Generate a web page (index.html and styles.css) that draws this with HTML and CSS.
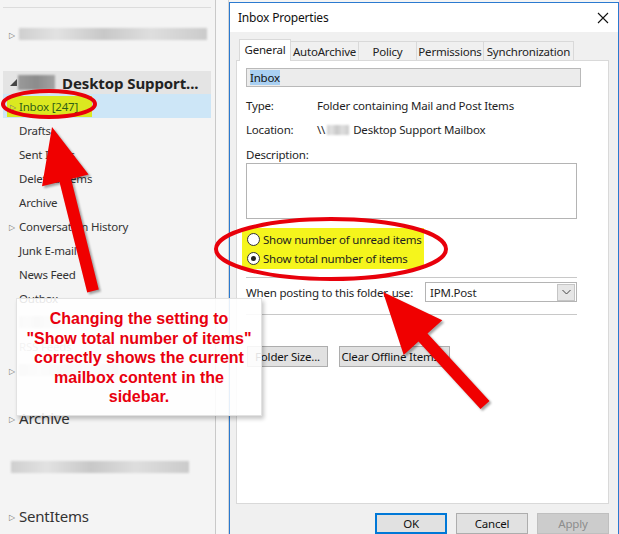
FILE: index.html
```html
<!DOCTYPE html>
<html lang="en">
<head>
    <meta charset="UTF-8">
    <title>Inbox Properties</title>
    <link rel="stylesheet" href="styles.css">
</head>
<body>
    <div class="screen">
        <aside class="sidebar">
            <div class="top-rule"></div>
            <div class="folder blurred-row"><span class="caret">&#9655;</span><span class="blur" style="width:188px"></span></div>
            <div class="account">
                <svg class="down" width="7" height="7" viewBox="0 0 7 7"><path d="M7 0V7H0Z" fill="#444"/></svg>
                <span class="blur dark" style="width:37px"></span>
                <b>Desktop Support...</b>
            </div>
            <div class="folder selected"><span class="hl"><span class="caret">&#9655;</span>Inbox [247]</span></div>
            <div class="folder">Drafts</div>
            <div class="folder">Sent Items</div>
            <div class="folder">Deleted Items</div>
            <div class="folder">Archive</div>
            <div class="folder"><span class="caret">&#9655;</span>Conversation History</div>
            <div class="folder">Junk E-mail</div>
            <div class="folder">News Feed</div>
            <div class="folder">Outbox</div>
            <div class="folder"><span class="blur" style="width:40px"></span></div>
            <div class="folder faded">RSS Feeds</div>
            <div class="folder"><span class="caret">&#9655;</span><span class="blur" style="width:100px"></span></div>
            <div class="store"><span class="caret">&#9655;</span>Archive</div>
            <div class="store plain"><span class="blur" style="width:178px"></span></div>
            <div class="store"><span class="caret">&#9655;</span>SentItems</div>
        </aside>

        <div class="backdrop"></div>

        <section class="dialog">
            <div class="titlebar">
                <span>Inbox Properties</span>
                <svg width="12" height="12" viewBox="0 0 12 12"><path d="M1 1L11 11M11 1L1 11" stroke="#111" stroke-width="1.1"/></svg>
            </div>
            <div class="dialog-body">
                <div class="tabs">
                    <div class="tab active" style="width:52px">General</div>
                    <div class="tab" style="width:69px">AutoArchive</div>
                    <div class="tab" style="width:59px">Policy</div>
                    <div class="tab" style="width:68px">Permissions</div>
                    <div class="tab" style="width:91px">Synchronization</div>
                </div>
                <div class="panel">
                    <div class="name-field"><span class="sel">Inbox</span></div>
                    <div class="info type-row"><span class="label">Type:</span><span>Folder containing Mail and Post Items</span></div>
                    <div class="info loc-row"><span class="label">Location:</span><span>\\<span class="blur small" style="width:22px"></span>Desktop Support Mailbox</span></div>
                    <div class="info desc-row">Description:</div>
                    <div class="desc-box"></div>
                    <div class="radios">
                        <div class="radio"><span class="dot"></span>Show number of unread items</div>
                        <div class="radio"><span class="dot on"></span>Show total number of items</div>
                    </div>
                    <div class="rule"></div>
                    <div class="posting">
                        <span>When posting to this folder, use:</span>
                        <div class="select">
                            <span>IPM.Post</span>
                            <span class="drop"><svg width="9" height="6" viewBox="0 0 9 6"><path d="M0.5 1L4.5 5L8.5 1" fill="none" stroke="#444"/></svg></span>
                        </div>
                    </div>
                    <div class="rule second"></div>
                    <div class="panel-buttons">
                        <button class="btn" style="width:81px">Folder Size...</button>
                        <button class="btn" style="width:111px">Clear Offline Items...</button>
                    </div>
                </div>
                <div class="footer">
                    <button class="btn default">OK</button>
                    <button class="btn">Cancel</button>
                    <button class="btn disabled">Apply</button>
                </div>
            </div>
        </section>
    </div>

    <div class="callout">
        Changing the setting to<br>
        "Show total number of items"<br>
        correctly shows the current<br>
        mailbox content in the<br>
        sidebar.
    </div>

    <svg class="marks" width="619" height="534" viewBox="0 0 619 534">
        <ellipse cx="49" cy="104" rx="46" ry="13" fill="none" stroke="#e8000b" stroke-width="4"/>
        <ellipse cx="331" cy="249" rx="115" ry="30" fill="none" stroke="#e8000b" stroke-width="4"/>
        <g class="arrow">
            <polygon points="52,127 88.6,174.6 71.1,178.9 98.8,289.5 87.2,292.5 59.5,181.9 42,186.2"/>
            <polygon points="383,292 442.3,320.2 427.5,333.6 489.5,401 480.5,409 418.5,341.6 403.7,355"/>
        </g>
    </svg>
</body>
</html>
```

FILE: styles.css
```css
body {
    margin: 0;
    width: 619px;
    height: 534px;
    overflow: hidden;
    font-family: "Noto Sans", "Open Sans", sans-serif;
    font-size: 11.5px;
    letter-spacing: -0.2px;
    white-space: nowrap;
    color: #1e1e1e;
    background-color: #f4f4f4;
    position: relative;
}
.screen {
    display: flex;
    height: 534px;
}

/* sidebar */
.sidebar {
    width: 215px;
    border-right: 1px solid #c9c9c9;
    background-color: #f4f4f4;
    padding-top: 7px;
    box-sizing: content-box;
    flex-shrink: 0;
}
.top-rule {
    height: 1px;
    margin: 0 4px 0 3px;
    background-color: #dcdcdc;
}
.folder {
    height: 24px;
    margin: 0 4px 0 3px;
    padding-left: 16px;
    display: flex;
    align-items: center;
    position: relative;
    color: #333;
}
.blurred-row {
    margin-top: 14px;
    margin-bottom: 25px;
}
.caret {
    position: absolute;
    left: 6px;
    font-size: 8px;
    color: #777;
}
.blur {
    display: inline-block;
    height: 12px;
    background: linear-gradient(90deg, #cfcfcf, #e2e2e2 20%, #c8c8c8 45%, #dedede 70%, #cbcbcb);
    filter: blur(1.2px);
}
.blur.dark {
    height: 15px;
    margin: 0 7px 0 1px;
    background: linear-gradient(90deg, #9a9a9a, #8c8c8c 50%, #a3a3a3);
}
.blur.small {
    height: 10px;
    margin: 0 4px 0 2px;
    vertical-align: middle;
}
.account {
    height: 23px;
    margin: 0 4px 0 3px;
    background-color: #e4e4e4;
    display: flex;
    align-items: center;
    padding-left: 7px;
}
.account b {
    font-size: 15px;
    letter-spacing: -0.1px;
    color: #222;
}
.folder.selected {
    background-color: #cde6f7;
    padding-left: 0;
}
.hl {
    display: flex;
    align-items: center;
    height: 21px;
    padding: 0 14px 0 12px;
    margin-left: 4px;
    background-color: #dbe820;
    color: #2f5f16;
    position: relative;
}
.hl .caret {
    left: 3px;
}
.faded {
    color: #9a9a9a;
}
.store {
    height: 30px;
    margin: 21px 4px 0 3px;
    padding-left: 16px;
    display: flex;
    align-items: center;
    position: relative;
    font-size: 15px;
    color: #333;
}
.store.plain {
    margin-top: 19px;
    padding-left: 8px;
}
.store:last-child {
    margin-top: 19px;
}

.backdrop {
    width: 12px;
    flex-shrink: 0;
    background-color: #f7f7f7;
    border-right: 1px solid #d4d4d4;
}

/* dialog */
.dialog {
    width: 388px;
    margin-top: 2px;
    border: 1px solid #2b7ad0;
    border-bottom: none;
    background-color: #f0f0f0;
    display: flex;
    flex-direction: column;
}
.titlebar {
    height: 29px;
    background-color: #fff;
    display: flex;
    align-items: center;
    justify-content: space-between;
    padding: 0 9px 0 8px;
    font-size: 12px;
    color: #111;
}
.dialog-body {
    padding: 0 9px 0 6px;
}
.tabs {
    display: flex;
    align-items: flex-end;
    margin-top: 7px;
    padding-left: 3px;
    height: 21px;
}
.tab {
    height: 19px;
    box-sizing: border-box;
    border: 1px solid #d9d9d9;
    border-bottom: none;
    margin-left: -1px;
    display: flex;
    align-items: center;
    justify-content: center;
    background-color: #f0f0f0;
    color: #222;
}
.tab.active {
    height: 22px;
    margin-left: 0;
    background-color: #fff;
    position: relative;
    z-index: 1;
    margin-bottom: -1px;
    align-items: flex-start;
    padding-top: 2px;
}
.panel {
    height: 435px;
    background-color: #fff;
    border: 1px solid #d9d9d9;
    padding: 7px 0 0 9px;
    box-sizing: content-box;
}
.name-field {
    width: 330px;
    height: 17px;
    border: 1px solid #b9b9b9;
    background-color: #ececec;
    display: flex;
    align-items: center;
    padding-left: 3px;
}
.sel {
    background-color: #a9d0f2;
    color: #111;
    line-height: 15px;
}
.info {
    height: 16px;
    display: flex;
    align-items: center;
}
.type-row { margin-top: 10px; }
.loc-row { margin-top: 8px; }
.desc-row { margin-top: 9px; }
.label {
    width: 71px;
}
.desc-box {
    width: 329px;
    height: 54px;
    margin-top: 1px;
    border: 1px solid #b4b4b4;
}
.radios {
    width: 182px;
    height: 41px;
    margin: 9px 0 0 -4px;
    background-color: #f5f51c;
    display: flex;
    flex-direction: column;
    justify-content: center;
    gap: 3px;
    padding-left: 5px;
    box-sizing: border-box;
}
.radio {
    display: flex;
    align-items: center;
    gap: 3px;
    height: 16px;
}
.dot {
    width: 11px;
    height: 11px;
    border: 1px solid #333;
    border-radius: 50%;
    background-color: #fff;
    position: relative;
}
.dot.on::after {
    content: "";
    position: absolute;
    left: 3px;
    top: 3px;
    width: 5px;
    height: 5px;
    border-radius: 50%;
    background-color: #222;
}
.rule {
    width: 331px;
    height: 1px;
    background-color: #c8c8c8;
    margin-top: 8px;
}
.rule.second {
    margin-top: 12px;
}
.posting {
    display: flex;
    align-items: center;
    justify-content: space-between;
    width: 331px;
    margin-top: 4px;
}
.select {
    width: 145px;
    height: 18px;
    border: 1px solid #b4b4b4;
    display: flex;
    align-items: center;
    justify-content: space-between;
    padding: 0 1px 0 4px;
}
.drop {
    width: 16px;
    height: 15px;
    background-color: #e6e6e6;
    border: 1px solid #c5c5c5;
    display: flex;
    align-items: center;
    justify-content: center;
}
.panel-buttons {
    display: flex;
    gap: 11px;
    margin: 31px 0 0 1px;
}
.btn {
    height: 21px;
    padding: 0;
    font-family: inherit;
    font-size: 11.5px;
    letter-spacing: -0.2px;
    color: #111;
    background-color: #e1e1e1;
    border: 1px solid #adadad;
    white-space: nowrap;
}
.footer {
    display: flex;
    justify-content: flex-end;
    gap: 9px;
    margin-top: 9px;
}
.footer .btn {
    width: 72px;
}
.btn.default {
    border: 2px solid #0078d7;
}
.btn.disabled {
    background-color: #cccccc;
    border-color: #bfbfbf;
    color: #8d8d8d;
}

/* annotations */
.callout {
    position: absolute;
    left: 16px;
    top: 298px;
    width: 246px;
    height: 118px;
    box-sizing: border-box;
    padding-top: 10px;
    background-color: rgba(255, 255, 255, 0.88);
    border: 1px solid #e2e2e2;
    box-shadow: 2px 3px 4px rgba(0, 0, 0, 0.22);
    font-family: "Liberation Sans", Arial, sans-serif;
    font-weight: bold;
    font-size: 16px;
    letter-spacing: 0;
    line-height: 19.5px;
    text-align: center;
    color: #e8000e;
}
.marks {
    position: absolute;
    left: 0;
    top: 0;
    pointer-events: none;
}
.arrow {
    fill: #f00000;
    filter: drop-shadow(2px 2px 1px rgba(0, 0, 0, 0.35));
}
```
